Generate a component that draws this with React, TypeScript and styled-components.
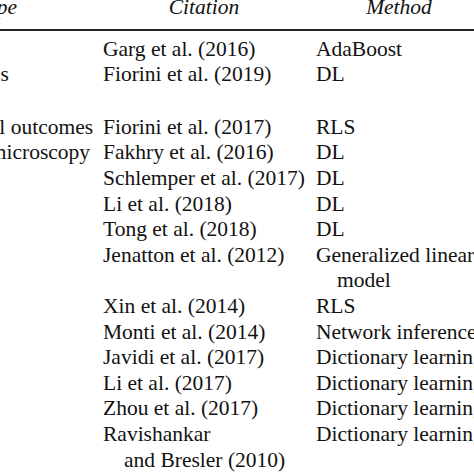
import React from 'react';
import styled, { createGlobalStyle } from 'styled-components';

const GlobalStyle = createGlobalStyle`
    html, body {
        margin: 0;
        padding: 0;
        background: #ffffff;
        overflow: hidden;
    }

    body {
        width: 474px;
        height: 474px;
    }
`;

interface Entry {
    type?: string;
    citation: string[];
    method: string[];
    spacerBefore?: boolean;
}

const ENTRIES: Entry[] = [
    { citation: ['Garg et al. (2016)'], method: ['AdaBoost'] },
    { type: 'EEG signals', citation: ['Fiorini et al. (2019)'], method: ['DL'] },
    { type: 'DM clinical outcomes', citation: ['Fiorini et al. (2017)'], method: ['RLS'], spacerBefore: true },
    { type: 'Darkfield microscopy', citation: ['Fakhry et al. (2016)'], method: ['DL'] },
    { citation: ['Schlemper et al. (2017)'], method: ['DL'] },
    { citation: ['Li et al. (2018)'], method: ['DL'] },
    { citation: ['Tong et al. (2018)'], method: ['DL'] },
    { citation: ['Jenatton et al. (2012)'], method: ['Generalized linear', 'model'] },
    { citation: ['Xin et al. (2014)'], method: ['RLS'] },
    { citation: ['Monti et al. (2014)'], method: ['Network inference'] },
    { citation: ['Javidi et al. (2017)'], method: ['Dictionary learning'] },
    { citation: ['Li et al. (2017)'], method: ['Dictionary learning'] },
    { citation: ['Zhou et al. (2017)'], method: ['Dictionary learning'] },
    { citation: ['Ravishankar', 'and Bresler (2010)'], method: ['Dictionary learning'] },
];

function Lines({ lines }: { lines: string[] }) {
    return (<>
        {lines.map((line, i) => (
            <React.Fragment key={i}>
                {i > 0 && <br />}
                {line}
            </React.Fragment>
        ))}
    </>);
}

export default function App() {
    return (<>
        <GlobalStyle />
        <Table>
            <colgroup>
                <Col width={201} />
                <Col width={213} />
                <Col width={177} />
            </colgroup>
            <thead>
                <tr>
                    <HeadCell>Type</HeadCell>
                    <HeadCell>Citation</HeadCell>
                    <HeadCell>Method</HeadCell>
                </tr>
            </thead>
            <tbody>
                {ENTRIES.map((entry, i) => (
                    <React.Fragment key={i}>
                        {entry.spacerBefore && <SpacerRow><td colSpan={3} /></SpacerRow>}
                        <Row first={i === 0}>
                            <Cell>{entry.type}</Cell>
                            <Cell><Lines lines={entry.citation} /></Cell>
                            <Cell><Lines lines={entry.method} /></Cell>
                        </Row>
                    </React.Fragment>
                ))}
            </tbody>
        </Table>
    </>);
}

const Table = styled.table`
    table-layout: fixed;
    border-collapse: collapse;
    width: 591px;
    margin: -5px 0 0 -98px;
    font-family: "Liberation Serif", "Times New Roman", serif;
    font-size: 21.5px;
    line-height: 25.6px;
    color: #121212;
`;

const Col = styled.col<{ width: number }>`
    width: ${props => props.width}px;
`;

const HeadCell = styled.th`
    padding: 0 11px 8px 0;
    font-style: italic;
    font-weight: normal;
    text-align: center;
    white-space: nowrap;
    border-bottom: 2px solid #262626;
`;

const Row = styled.tr<{ first?: boolean }>`
    td {
        padding-top: ${props => props.first ? '6px' : '0'};
    }
`;

const SpacerRow = styled.tr`
    td {
        height: 27px;
        padding: 0;
    }
`;

const Cell = styled.td`
    padding: 0 11px 0 21px;
    text-indent: -21px;
    text-align: left;
    vertical-align: top;
    white-space: nowrap;
`;
